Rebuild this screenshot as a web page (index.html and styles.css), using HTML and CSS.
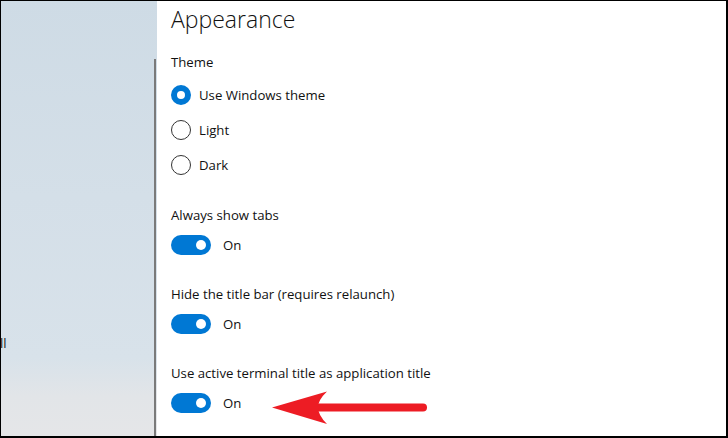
FILE: index.html
```html
<!DOCTYPE html>
<html>
<head>
<meta charset="utf-8">
<link rel="stylesheet" href="styles.css">
</head>
<body>
<div class="frame">
  <aside class="sidebar">
    <div class="sidebar-body">
      <div class="cut-label">ll</div>
    </div>
    <div class="scrollbar"></div>
  </aside>
  <main class="content">
    <h1 class="title">Appearance</h1>

    <section class="group">
      <div class="label">Theme</div>
      <div class="radios">
        <div class="radio-row"><span class="radio checked"></span><span>Use Windows theme</span></div>
        <div class="radio-row"><span class="radio"></span><span>Light</span></div>
        <div class="radio-row"><span class="radio"></span><span>Dark</span></div>
      </div>
    </section>

    <section class="setting first">
      <div class="label">Always show tabs</div>
      <div class="toggle-row"><span class="toggle"><span class="knob"></span></span><span>On</span></div>
    </section>

    <section class="setting">
      <div class="label">Hide the title bar (requires relaunch)</div>
      <div class="toggle-row"><span class="toggle"><span class="knob"></span></span><span>On</span></div>
    </section>

    <section class="setting">
      <div class="label">Use active terminal title as application title</div>
      <div class="toggle-row"><span class="toggle"><span class="knob"></span></span><span>On</span></div>
    </section>

    <svg class="arrow" width="165" height="40" viewBox="0 0 165 40" aria-hidden="true">
      <line x1="46" y1="19.5" x2="155" y2="19.5" stroke="#ed1c24" stroke-width="8" stroke-linecap="round"/>
      <path d="M4 19.5 L59 3.5 Q50 12 50 19.5 Q50 27 59 36 Z" fill="#ed1c24"/>
    </svg>
  </main>
</div>
</body>
</html>
```

FILE: styles.css
```css
html, body {
  margin: 0;
  padding: 0;
  background: #ffffff;
}

.frame {
  box-sizing: border-box;
  width: 728px;
  height: 438px;
  border-style: solid;
  border-color: #000;
  border-width: 1px 2px 2px 1px;
  display: flex;
  overflow: hidden;
  font-family: "Open Sans", "Noto Sans", sans-serif;
  color: #111;
}

.sidebar {
  width: 156px;
  flex: none;
  display: flex;
  background: linear-gradient(180deg, #cedbe5 0%, #d4dfe8 45%, #d8e2ea 82%, #e2e5e8 91%, #e5e6e8 100%);
}

.sidebar-body {
  flex: 1;
  padding-top: 333px;
}

.cut-label {
  font-size: 13px;
  line-height: 18px;
  margin-left: -1px;
  color: #222;
}

.scrollbar {
  width: 2px;
  margin-top: 58px;
  margin-right: 1px;
  background: #7a7a7a;
}

.content {
  flex: 1;
  position: relative;
  padding-left: 14px;
  background: #fff;
}

.title {
  margin: 0;
  padding-top: 3px;
  font-size: 23px;
  font-weight: 300;
  line-height: 30px;
  color: #111;
}

.label {
  font-size: 13.2px;
  line-height: 18px;
}

.group {
  margin-top: 19px;
}

.radios {
  margin-top: 14px;
  display: flex;
  flex-direction: column;
  gap: 15px;
}

.radio-row {
  display: flex;
  align-items: center;
  gap: 8px;
  font-size: 13.2px;
  line-height: 20px;
}

.radio {
  box-sizing: border-box;
  width: 20px;
  height: 20px;
  border-radius: 50%;
  border: 1px solid #333;
  flex: none;
}

.radio.checked {
  border: 6px solid #0078d4;
  background: #fff;
}

.setting {
  margin-top: 30px;
}

.setting.first {
  margin-top: 31px;
}

.toggle-row {
  margin-top: 11px;
  display: flex;
  align-items: center;
  gap: 12px;
  font-size: 13.2px;
  line-height: 20px;
}

.toggle {
  position: relative;
  width: 40px;
  height: 20px;
  border-radius: 10px;
  background: #0078d4;
  flex: none;
}

.knob {
  position: absolute;
  right: 5px;
  top: 5px;
  width: 10px;
  height: 10px;
  border-radius: 50%;
  background: #fff;
}

.arrow {
  position: absolute;
  left: 111px;
  top: 387px;
}
```
